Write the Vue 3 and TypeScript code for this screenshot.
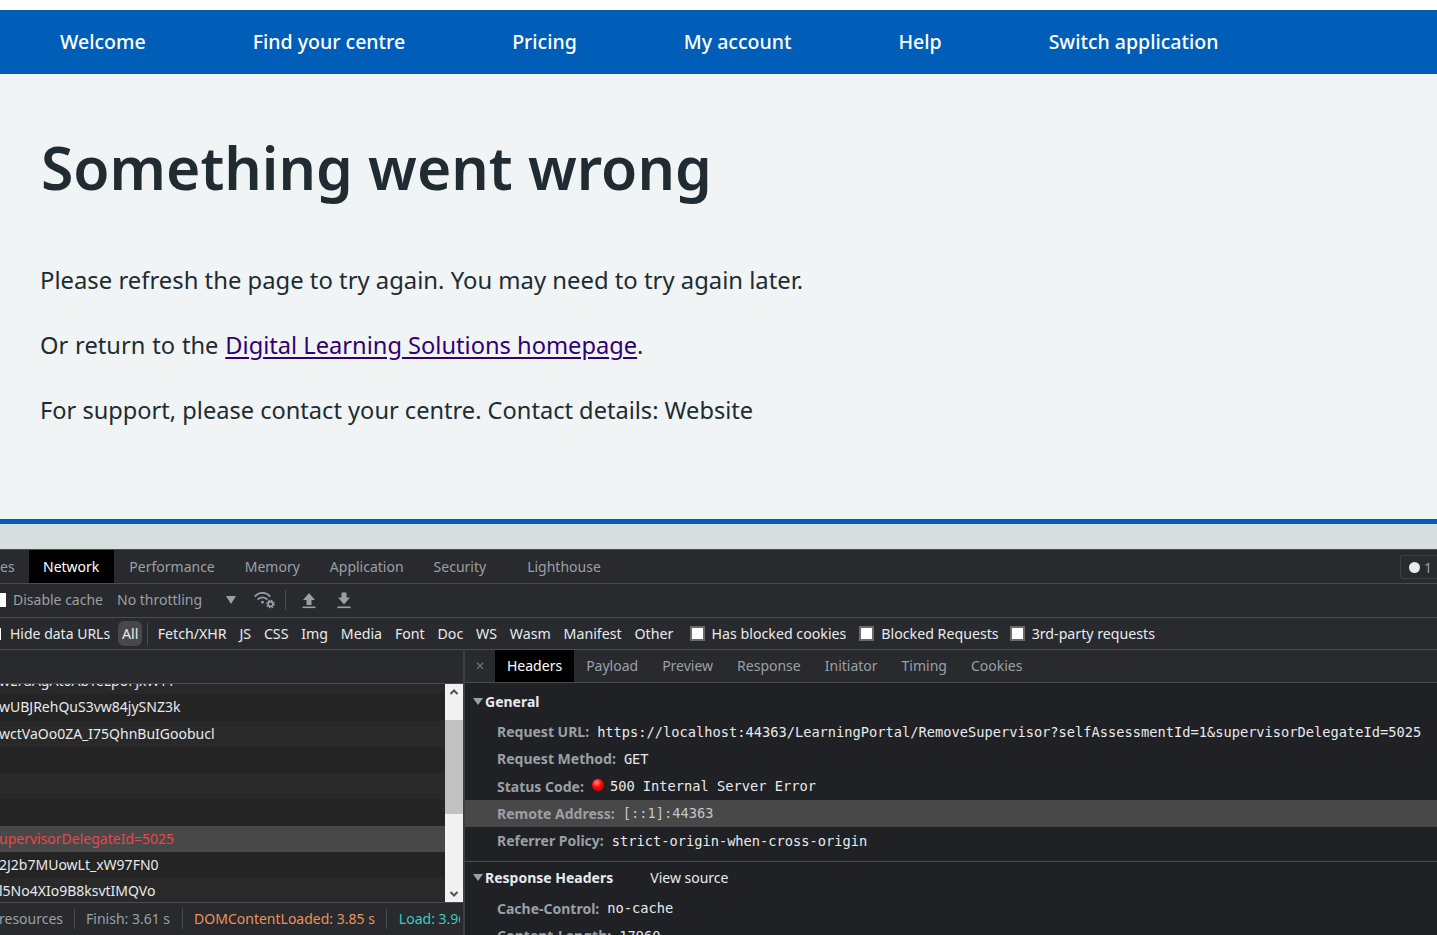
<script setup lang="ts">
const navItems: string[] = ['Welcome', 'Find your centre', 'Pricing', 'My account', 'Help', 'Switch application']
const mainTabs: string[] = ['Performance', 'Memory', 'Application', 'Security']
const filters: string[] = ['Fetch/XHR', 'JS', 'CSS', 'Img', 'Media', 'Font', 'Doc', 'WS', 'Wasm', 'Manifest', 'Other']
const checks: string[] = ['Has blocked cookies', 'Blocked Requests', '3rd-party requests']
const detailTabs: string[] = ['Payload', 'Preview', 'Response', 'Initiator', 'Timing', 'Cookies']
const rows = [
  { text: 'wErdAgAt0AbTeLpoFjxWTY' },
  { text: 'wUBJRehQuS3vw84jySNZ3k' },
  { text: 'wctVaOo0ZA_I75QhnBuIGoobucl' },
  { text: '' },
  { text: '' },
  { text: '' },
  { text: 'upervisorDelegateId=5025', selected: true },
  { text: '2J2b7MUowLt_xW97FN0' },
  { text: 'l5No4XIo9B8ksvtIMQVo' },
]
</script>

<template>
  <div class="page">
    <header class="nav">
      <span v-for="item in navItems" :key="item" class="nav-item">{{ item }}</span>
    </header>
    <main class="content">
      <h1 class="title">Something went wrong</h1>
      <p class="para first">Please refresh the page to try again. You may need to try again later.</p>
      <p class="para"><span class="lead">Or return to the </span><a class="link">Digital Learning Solutions homepage</a>.</p>
      <p class="para last">For support, please contact your centre. Contact details: Website</p>
    </main>
    <div class="footer-band"></div>

    <section class="devtools">
      <div class="tabbar">
        <span class="tab clipped">es</span>
        <span class="tab active">Network</span>
        <span v-for="t in mainTabs" :key="t" class="tab">{{ t }}</span>
        <span class="tab lighthouse">Lighthouse</span>
        <span class="badge"><i class="badge-dot"></i>1</span>
      </div>

      <div class="toolbar">
        <i class="cut-check"></i>
        <span class="dim">Disable cache</span>
        <span class="dim throttle">No throttling</span>
        <i class="caret"></i>
        <svg class="wifi" width="22" height="18" viewBox="0 0 22 18">
          <path d="M0.8 5.6C5 0.6 12 0.6 16.2 5.6" fill="none" stroke="#9aa0a6" stroke-width="1.7" />
          <path d="M3.6 8.6C6.2 5.6 10.8 5.6 13.4 8.6" fill="none" stroke="#9aa0a6" stroke-width="1.7" />
          <circle cx="8.5" cy="11.2" r="1.4" fill="#9aa0a6" />
          <circle cx="16.5" cy="13" r="2.4" fill="none" stroke="#9aa0a6" stroke-width="1.7" />
          <circle cx="16.5" cy="13" r="3.7" fill="none" stroke="#9aa0a6" stroke-width="1.3" stroke-dasharray="1.6 1.3" />
        </svg>
        <i class="vsep"></i>
        <svg class="arrow up" width="16" height="18" viewBox="0 0 16 18">
          <path d="M8 2L14 9H10.5V14H5.5V9H2Z" fill="#9aa0a6" /><rect x="1.5" y="15.5" width="13" height="1.6" fill="#9aa0a6" />
        </svg>
        <svg class="arrow" width="16" height="18" viewBox="0 0 16 18">
          <path d="M8 13.5L14 6.5H10.5V1.5H5.5V6.5H2Z" fill="#9aa0a6" /><rect x="1.5" y="15.5" width="13" height="1.6" fill="#9aa0a6" />
        </svg>
      </div>

      <div class="filterbar">
        <i class="cut-check small"></i>
        <span class="hide-urls">Hide data URLs</span>
        <span class="pill">All</span>
        <i class="vsep filter-sep"></i>
        <span v-for="f in filters" :key="f" class="filter">{{ f }}</span>
        <label v-for="(c, i) in checks" :key="c" class="check" :class="{ firstcheck: i === 0, lastcheck: i === 2 }"><i class="box"></i>{{ c }}</label>
      </div>

      <div class="split">
        <div class="left">
          <div class="list-head"></div>
          <div class="list-area">
            <div class="list">
              <div class="rows">
                <div v-for="(r, i) in rows" :key="i" class="row" :class="{ even: i % 2 === 1, sel: r.selected }">{{ r.text }}</div>
              </div>
            </div>
            <div class="scrollbar">
              <svg class="sb-arrow" width="18" height="17" viewBox="0 0 18 17"><path d="M5.5 10L9 6.5L12.5 10" fill="none" stroke="#505050" stroke-width="2" /></svg>
              <div class="sb-track"><div class="sb-thumb"></div></div>
              <svg class="sb-arrow" width="18" height="17" viewBox="0 0 18 17"><path d="M5.5 7L9 10.5L12.5 7" fill="none" stroke="#505050" stroke-width="2" /></svg>
            </div>
          </div>
          <div class="status">
            <div class="status-inner">
              <span class="st first-st">resources</span>
              <span class="st">Finish: 3.61 s</span>
              <span class="st orange">DOMContentLoaded: 3.85 s</span>
              <span class="st teal">Load: 3.96 s</span>
            </div>
          </div>
        </div>

        <div class="right">
          <div class="detail-tabs">
            <span class="close">✕</span>
            <span class="dtab active">Headers</span>
            <span v-for="t in detailTabs" :key="t" class="dtab">{{ t }}</span>
          </div>
          <div class="detail">
            <div class="sec-head"><i class="tri"></i><b>General</b></div>
            <div class="kv"><b>Request URL:</b><span>https://localhost:44363/LearningPortal/RemoveSupervisor?selfAssessmentId=1&amp;supervisorDelegateId=5025</span></div>
            <div class="kv"><b>Request Method:</b><span>GET</span></div>
            <div class="kv"><b>Status Code:</b><i class="ball"></i><span>500 Internal Server Error</span></div>
            <div class="kv hl"><b>Remote Address:</b><span>[::1]:44363</span></div>
            <div class="kv"><b>Referrer Policy:</b><span>strict-origin-when-cross-origin</span></div>
            <div class="sep"></div>
            <div class="sec-head second"><i class="tri"></i><b>Response Headers</b><em>View source</em></div>
            <div class="kv"><b>Cache-Control:</b><span>no-cache</span></div>
            <div class="kv"><b>Content-Length:</b><span>17960</span></div>
          </div>
        </div>
      </div>
    </section>
  </div>
</template>

<style>
html, body { margin: 0; height: 100%; overflow: hidden; background: #fff; }
</style>

<style scoped>
.page { height: 935px; overflow: hidden; display: flex; flex-direction: column; padding-top: 10px; box-sizing: border-box; font-family: "Noto Sans", "Open Sans", sans-serif; }
.nav { height: 64px; flex: none; box-sizing: border-box; padding-bottom: 2px; background: #005eb8; display: flex; align-items: center; gap: 107px; padding-left: 60px; color: #fff; }
.nav-item { font-size: 19.55px; font-weight: 500; white-space: nowrap; }
.content { height: 445px; flex: none; box-sizing: border-box; background: #f0f4f5; padding: 54px 40px 0; color: #212b32; }
.title { margin: 0 0 0 1px; font-size: 58.8px; line-height: 78px; font-weight: 650; color: #212b32; white-space: nowrap; }
.para { margin: 0 0 33px; font-size: 23.65px; line-height: 32px; white-space: nowrap; }
.para.first { margin-top: 58px; font-size: 23.84px; }
.para.last { font-size: 23.6px; }
.lead { word-spacing: 0.75px; }
.link { color: #330072; text-decoration: underline; text-underline-offset: 3px; }
.footer-band { height: 25px; flex: none; background: #d8dde0; border-top: 5px solid #005eb8; }

.devtools { flex: 1; min-height: 0; background: #292a2d; color: #e8eaed; font-size: 14px; display: flex; flex-direction: column; border-top: 1px solid #4a4c50; overflow: hidden; }
.tabbar { height: 33px; flex: none; display: flex; align-items: stretch; border-bottom: 1px solid #494c50; }
.tab { display: flex; align-items: center; padding: 0 15px; color: #9aa0a6; white-space: nowrap; }
.tab.clipped { padding: 0 15px 0 0; width: 14px; }
.tab.active { background: #000; color: #fff; padding: 0 15px 0 14px; }
.tab.lighthouse { margin-left: 11px; }
.badge { margin-left: auto; margin-top: 5px; width: 37px; height: 24px; box-sizing: border-box; border: 1px solid #3c4043; border-right: 0; border-radius: 3px 0 0 3px; display: flex; align-items: center; gap: 4px; padding-left: 8px; color: #9aa0a6; }
.badge-dot { width: 11px; height: 11px; border-radius: 50%; background: #e8eaed; }
.toolbar { height: 31px; padding-bottom: 2px; flex: none; display: flex; align-items: center; border-bottom: 1px solid #494c50; white-space: nowrap; }
.cut-check { width: 6px; height: 14px; background: #fff; flex: none; margin-right: 7px; }
.cut-check.small { width: 1px; height: 12px; margin-right: 9px; }
.dim { color: #9aa0a6; }
.throttle { margin-left: 14px; }
.caret { width: 0; height: 0; border-left: 5px solid transparent; border-right: 5px solid transparent; border-top: 8px solid #9aa0a6; margin-left: 24px; }
.wifi { margin-left: 18px; }
.vsep { width: 1px; height: 20px; background: #4a4c50; margin-left: 9px; flex: none; }
.arrow { margin-left: 11px; }
.arrow.up { margin-left: 15px; }
.arrow + .arrow { margin-left: 19px; }
.filterbar { height: 31px; flex: none; display: flex; align-items: center; border-bottom: 1px solid #494c50; white-space: nowrap; font-size: 14.2px; }
.hide-urls { font-size: 14px; }
.pill { background: #484848; height: 25px; width: 24px; border-radius: 6px; display: flex; align-items: center; justify-content: center; margin-left: 8px; }
.filter-sep { margin-left: 5px; height: 22px; margin-right: 9.5px; }
.filter { margin-right: 12.8px; }
.check { display: flex; align-items: center; margin-left: 13px; }
.check.firstcheck { margin-left: 3.5px; }
.check.lastcheck { margin-left: 11px; }
.box { width: 11px; height: 11px; background: #fff; border: 2px solid #6b6b6b; margin-right: 7px; flex: none; }

.split { flex: 1; min-height: 0; display: flex; }
.left { width: 463px; flex: none; display: flex; flex-direction: column; border-right: 2px solid #3d3f43; }
.list-head { height: 33px; flex: none; border-bottom: 1px solid #494c50; }
.list-area { height: 218px; flex: none; display: flex; overflow: hidden; }
.list { flex: 1; min-width: 0; overflow: hidden; }
.rows { margin-top: -16px; }
.row { height: 26.25px; line-height: 26.25px; background: #292929; color: #e8eaed; white-space: nowrap; overflow: hidden; font-size: 14px; text-indent: -1px; }
.row.even { background: #242424; }
.row.sel { background: #484848; color: #e9474a; }
.scrollbar { width: 18px; flex: none; background: #f1f1f1; display: flex; flex-direction: column; }
.sb-arrow { flex: none; display: block; }
.sb-track { flex: 1; padding-top: 19px; }
.sb-thumb { height: 94px; background: #c1c1c1; }
.status { flex: 1; border-top: 1px solid #494c50; display: flex; align-items: center; color: #9aa0a6; }
.status-inner { width: 460px; display: flex; align-items: center; overflow: hidden; white-space: nowrap; }
.st { padding: 0 11.5px; height: 20px; line-height: 20px; border-left: 1px solid #4a4c50; flex: none; }
.first-st { border-left: 0; padding: 0 10.5px 0 0; margin-left: -1px; }
.orange { color: #e8935a; }
.teal { color: #3dcbbe; }

.right { flex: 1; min-width: 0; display: flex; flex-direction: column; background: #202124; }
.detail-tabs { height: 33px; flex: none; background: #292a2d; display: flex; align-items: stretch; border-bottom: 1px solid #494c50; box-sizing: border-box; white-space: nowrap; }
.close { width: 30px; display: flex; align-items: center; justify-content: center; color: #6f7378; font-size: 12px; padding-bottom: 2px; }
.dtab { display: flex; align-items: center; padding: 0 12px 2px; color: #9aa0a6; }
.dtab.active { background: #000; color: #fff; }
.detail { white-space: nowrap; overflow: hidden; flex: 1; }
.sec-head { height: 27px; margin-top: 5px; margin-bottom: 3px; display: flex; align-items: center; padding-left: 8px; color: #e8eaed; }
.sec-head b { font-weight: 700; }
.sec-head em { font-style: normal; font-weight: 400; margin-left: 37px; }
.sec-head.second { margin-top: 2.5px; margin-bottom: 3.5px; }
.tri { width: 0; height: 0; border-left: 5px solid transparent; border-right: 5px solid transparent; border-top: 7px solid #9aa0a6; margin-right: 2px; }
.kv { height: 27.25px; display: flex; align-items: center; padding-left: 32px; }
.kv b { color: #9aa0a6; font-weight: 700; margin-right: 8px; }
.kv span { font-family: "DejaVu Sans Mono", monospace; font-size: 13.7px; color: #e8eaed; }
.kv.hl { background: #484848; }
.kv.hl span { color: #c4c7ca; }
.ball { width: 12px; height: 12px; border-radius: 50%; margin: 0 6px 2px 0; background: radial-gradient(circle at 40% 30%, #ff8a80 0, #f00 45%, #b00 100%); flex: none; }
.sep { height: 1px; background: #494c50; margin-top: 6.5px; }
</style>
